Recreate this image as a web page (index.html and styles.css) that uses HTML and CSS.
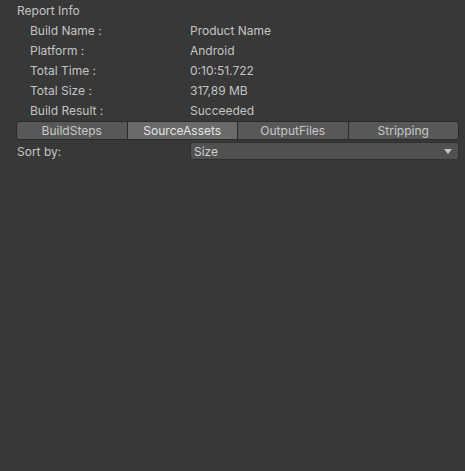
FILE: index.html
```html
<!DOCTYPE html>
<html>
<head>
<meta charset="utf-8">
<link rel="stylesheet" href="styles.css">
</head>
<body>
<div class="panel">
  <div class="heading">Report Info</div>
  <div class="info">
    <div class="row"><span class="key">Build Name :</span><span class="val">Product Name</span></div>
    <div class="row"><span class="key">Platform :</span><span class="val">Android</span></div>
    <div class="row"><span class="key">Total Time :</span><span class="val">0:10:51.722</span></div>
    <div class="row"><span class="key">Total Size :</span><span class="val">317,89 MB</span></div>
    <div class="row"><span class="key">Build Result :</span><span class="val">Succeeded</span></div>
  </div>
  <div class="tabs">
    <div class="tab">BuildSteps</div>
    <div class="tab active">SourceAssets</div>
    <div class="tab">OutputFiles</div>
    <div class="tab">Stripping</div>
  </div>
  <div class="sortrow">
    <span class="sortlabel">Sort by:</span>
    <div class="dropdown">
      <span>Size</span>
      <svg class="arrow" width="8" height="5" viewBox="0 0 8 5"><path d="M0 0H8L4 5Z" fill="#c4c4c4"/></svg>
    </div>
  </div>
</div>
</body>
</html>
```
FILE: styles.css
```css
html, body {
  margin: 0;
  padding: 0;
  background: #383838;
  width: 465px;
  height: 471px;
  overflow: hidden;
}
body {
  font-family: Inter, "Noto Sans", sans-serif;
  font-size: 12px;
  color: #c4c4c4;
}
.panel {
  padding: 1px 6px 0 16px;
}
.heading {
  height: 20px;
  line-height: 20px;
  padding-left: 1px;
}
.info .row {
  display: flex;
  height: 20px;
  line-height: 20px;
}
.key {
  width: 160px;
  padding-left: 14px;
}
.val {
  flex: 1;
}
.tabs {
  display: flex;
  background: #2a2a2a;
  border: 1px solid #2a2a2a;
  box-sizing: border-box;
  gap: 1px;
  border-radius: 3px;
  overflow: hidden;
  height: 19px;
  margin-top: 0;
}
.tab {
  flex: 1;
  background: #585858;
  text-align: center;
  line-height: 18px;
  color: #c8c8c8;
}
.tab.active {
  background: #6a6a6a;
  color: #e4e4e4;
}
.sortrow {
  display: flex;
  align-items: center;
  height: 20px;
  margin-top: 1px;
}
.sortlabel {
  width: 173px;
  padding-left: 1px;
}
.dropdown {
  flex: 1;
  height: 18px;
  box-sizing: border-box;
  background: #515151;
  border: 1px solid #303030;
  border-radius: 3px;
  display: flex;
  align-items: center;
  justify-content: space-between;
  padding: 0 6px 0 3px;
  color: #d2d2d2;
}
.arrow {
  display: block;
}
```
